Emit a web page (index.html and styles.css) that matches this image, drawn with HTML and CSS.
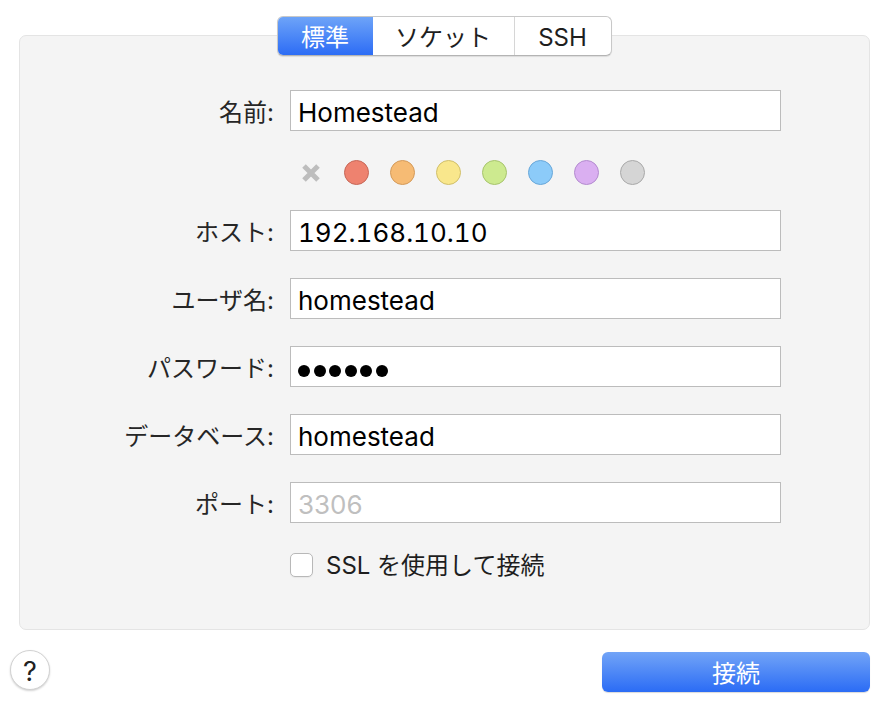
FILE: index.html
```html
<!DOCTYPE html>
<html lang="ja">
<head>
<meta charset="utf-8">
<title>接続</title>
<link rel="stylesheet" href="styles.css">
</head>
<body>
<div class="window">
  <div class="tabs">
    <div class="seg-group">
      <div class="seg seg-std active">標準</div>
      <div class="seg seg-sock">ソケット</div>
      <div class="seg seg-ssh">SSH</div>
    </div>
  </div>

  <div class="panel">
    <div class="form">
      <div class="label">名前:</div>
      <div class="field">Homestead</div>

      <div class="colors">
        <span class="swatch none">
          <svg width="20" height="20" viewBox="0 0 20 20"><path d="M3 3 L17 17 M17 3 L3 17" stroke="#bdbdbd" stroke-width="5" stroke-linecap="butt"/></svg>
        </span>
        <span class="swatch dot red"></span>
        <span class="swatch dot orange"></span>
        <span class="swatch dot yellow"></span>
        <span class="swatch dot green"></span>
        <span class="swatch dot blue"></span>
        <span class="swatch dot purple"></span>
        <span class="swatch dot gray"></span>
      </div>

      <div class="label">ホスト:</div>
      <div class="field numeric">192.168.10.10</div>

      <div class="label">ユーザ名:</div>
      <div class="field">homestead</div>

      <div class="label">パスワード:</div>
      <div class="field password" aria-label="パスワード">
        <span class="pw"></span><span class="pw"></span><span class="pw"></span><span class="pw"></span><span class="pw"></span><span class="pw"></span>
      </div>

      <div class="label">データベース:</div>
      <div class="field">homestead</div>

      <div class="label">ポート:</div>
      <div class="field placeholder">3306</div>

      <div class="check-row">
        <span class="checkbox"></span>
        <span class="check-label">SSL を使用して接続</span>
      </div>
    </div>
  </div>

  <div class="bottom">
    <div class="help">?</div>
    <div class="connect">接続</div>
  </div>
</div>
</body>
</html>
```

FILE: styles.css
```css
html, body {
  margin: 0;
  padding: 0;
  background: #ffffff;
}

body {
  width: 888px;
  height: 714px;
  overflow: hidden;
  font-family: Inter, "Noto Sans CJK JP", sans-serif;
  color: #262626;
}

.window {
  padding-top: 16px;
}

.tabs {
  display: flex;
  justify-content: center;
  position: relative;
  z-index: 2;
}

.seg-group {
  display: flex;
  height: 40px;
  box-sizing: border-box;
  border: 1px solid #c8c8c8;
  border-bottom-color: #b4b4b4;
  border-radius: 6px;
  background: #ffffff;
  box-shadow: 0 1px 1px rgba(0, 0, 0, 0.10);
  overflow: hidden;
}

.seg {
  display: flex;
  align-items: center;
  justify-content: center;
  font-size: 24px;
  color: #1e1e1e;
  line-height: 1;
  padding-top: 3px;
  box-sizing: border-box;
}

.seg-std { width: 96px; }
.seg-sock { width: 142px; border-right: 1px solid #d6d6d6; }
.seg-ssh { width: 96px; }

.seg.active {
  background: linear-gradient(#6fa5f8, #2b6bf5);
  color: #ffffff;
  margin: -1px 0 -1px -1px;
  padding-left: 1px;
}

.panel {
  position: relative;
  z-index: 1;
  margin: -21px 18px 0 19px;
  height: 595px;
  box-sizing: border-box;
  background: #f4f4f4;
  border: 1px solid #e4e4e4;
  border-radius: 7px;
  padding-top: 54px;
}

.form {
  display: grid;
  grid-template-columns: 254px 491px;
  column-gap: 16px;
  row-gap: 27px;
  align-items: center;
}

.label {
  text-align: right;
  font-size: 24px;
  color: #262626;
  line-height: 1;
  padding-top: 4px;
}

.field {
  height: 41px;
  box-sizing: border-box;
  background: #ffffff;
  border: 1px solid #bcbcbc;
  font-size: 26px;
  color: #000000;
  padding: 5px 7px 0;
  display: flex;
  align-items: center;
  line-height: 1;
}

.field.numeric {
  font-feature-settings: "tnum" 1;
}

.field.placeholder {
  color: #bfbfbf;
}

.field.password {
  gap: 3.6px;
  padding-top: 9px;
}

.pw {
  width: 12px;
  height: 12px;
  border-radius: 50%;
  background: #000000;
}

.colors {
  grid-column: 2;
  display: flex;
  align-items: center;
  gap: 21px;
  padding-left: 8px;
  height: 25px;
  margin-top: 2px;
  margin-bottom: -2px;
}

.swatch {
  width: 25px;
  height: 25px;
  box-sizing: border-box;
  display: flex;
  align-items: center;
  justify-content: center;
}

.dot {
  border-radius: 50%;
  border: 1.5px solid;
}

.red    { background: #ee826f; border-color: #c66757; }
.orange { background: #f6bb74; border-color: #d49a59; }
.yellow { background: #f9e78c; border-color: #d0bf6a; }
.green  { background: #cdea8f; border-color: #a7c46d; }
.blue   { background: #8ccbf9; border-color: #68a7d9; }
.purple { background: #daaff1; border-color: #b38bcf; }
.gray   { background: #d5d5d5; border-color: #a9a9a9; }

.check-row {
  grid-column: 2;
  height: 30px;
  display: flex;
  align-items: center;
  gap: 13px;
}

.checkbox {
  width: 23px;
  height: 24px;
  box-sizing: border-box;
  background: #ffffff;
  border: 1px solid #b8b8b8;
  border-radius: 5px;
  box-shadow: 0 1px 1px rgba(0, 0, 0, 0.05);
}

.check-label {
  font-size: 24px;
  color: #1e1e1e;
  line-height: 1;
  padding-top: 2px;
}

.bottom {
  display: flex;
  justify-content: space-between;
  align-items: flex-start;
  margin-top: 20px;
  padding: 0 18px 0 10px;
}

.help {
  width: 40px;
  height: 40px;
  box-sizing: border-box;
  border-radius: 50%;
  background: #ffffff;
  border: 1px solid #d2d2d2;
  box-shadow: 0 1px 2px rgba(0, 0, 0, 0.18);
  display: flex;
  align-items: center;
  justify-content: center;
  font-size: 27px;
  color: #222222;
  line-height: 1;
  padding-top: 2px;
}

.connect {
  margin-top: 2px;
  width: 268px;
  height: 40px;
  box-sizing: border-box;
  border-radius: 6px;
  background: linear-gradient(#72a4f7, #2b6cf5);
  box-shadow: 0 1px 1px rgba(0, 0, 0, 0.15);
  color: #ffffff;
  font-size: 24px;
  display: flex;
  align-items: center;
  justify-content: center;
  line-height: 1;
  padding-top: 3px;
}
```
